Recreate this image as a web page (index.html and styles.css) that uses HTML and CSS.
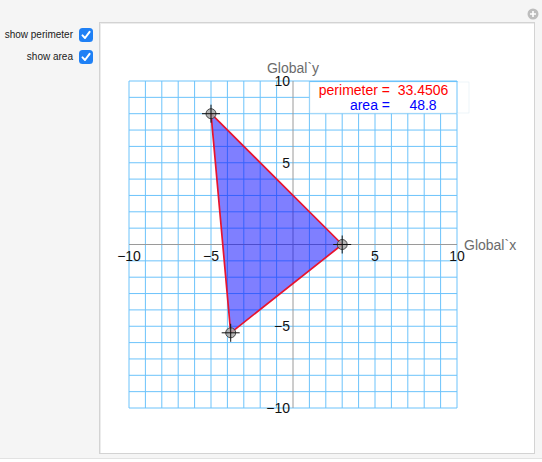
FILE: index.html
```html
<!DOCTYPE html>
<html>
<head>
<meta charset="utf-8">
<link rel="stylesheet" href="styles.css">
</head>
<body>
<div class="app">
  <div class="controls">
    <label class="row"><span class="lbl">show perimeter</span><span class="cb"><svg viewBox="0 0 14 14" width="14" height="14"><path d="M3.5 7.4 L6 10 L10.6 3.8" fill="none" stroke="#fff" stroke-width="2" stroke-linecap="round" stroke-linejoin="round"/></svg></span></label>
    <label class="row"><span class="lbl">show area</span><span class="cb"><svg viewBox="0 0 14 14" width="14" height="14"><path d="M3.5 7.4 L6 10 L10.6 3.8" fill="none" stroke="#fff" stroke-width="2" stroke-linecap="round" stroke-linejoin="round"/></svg></span></label>
  </div>
  <div class="panel">
    <svg class="plot" width="434" height="430" viewBox="100 23 434 430">
      <g class="grid" stroke="#6cc3fb" stroke-width="1" fill="none">
        <path d="M129 81V408M145.4 81V408M161.8 81V408M178.2 81V408M194.6 81V408M211 81V408M227.4 81V408M243.8 81V408M260.2 81V408M276.6 81V408M309.4 81V408M325.8 81V408M342.2 81V408M358.6 81V408M375 81V408M391.4 81V408M407.8 81V408M424.2 81V408M440.6 81V408M457 81V408"/>
        <path d="M129 81H457M129 97.35H457M129 113.7H457M129 130.05H457M129 146.4H457M129 162.75H457M129 179.1H457M129 195.45H457M129 211.8H457M129 228.15H457M129 260.85H457M129 277.2H457M129 293.55H457M129 309.9H457M129 326.25H457M129 342.6H457M129 358.95H457M129 375.3H457M129 391.65H457M129 408H457"/>
      </g>
      <g stroke="#9a9a9a" stroke-width="1">
        <path d="M293 81V408M129 244.5H457"/>
      </g>
      <rect x="310" y="82" width="159" height="31" fill="#fff" stroke="#e2edf5" stroke-width="0.6"/>
      <path d="M310 81.5H457M457 81V113" stroke="#6cc3fb" stroke-width="1"/>
      <text class="leg red" x="390" y="95" text-anchor="end">perimeter =</text>
      <text class="leg red" x="423" y="95" text-anchor="middle">33.4506</text>
      <text class="leg blue" x="390" y="110" text-anchor="end">area =</text>
      <text class="leg blue" x="423" y="110" text-anchor="middle">48.8</text>

      <polygon points="211,113.7 342.2,244.5 230.7,332.8" fill="rgba(0,0,255,0.5)" stroke="#e8142e" stroke-width="1.7" stroke-linejoin="round"/>

      <g class="loc">
        <circle cx="211" cy="113.7" r="5" fill="#a8a8a8" fill-opacity="0.85" stroke="#3a3a3a" stroke-width="0.9"/>
        <path d="M202 113.7H220M211 104.7V122.7" stroke="#111" stroke-width="1"/>
        <circle cx="342.2" cy="244.5" r="5" fill="#a8a8a8" fill-opacity="0.85" stroke="#3a3a3a" stroke-width="0.9"/>
        <path d="M333.2 244.5H351.2M342.2 235.5V253.5" stroke="#111" stroke-width="1"/>
        <circle cx="230.7" cy="332.8" r="5" fill="#a8a8a8" fill-opacity="0.85" stroke="#3a3a3a" stroke-width="0.9"/>
        <path d="M221.7 332.8H239.7M230.7 323.8V341.8" stroke="#111" stroke-width="1"/>
      </g>

      <g class="ticks">
        <text x="129" y="261" text-anchor="middle">−10</text>
        <text x="211" y="261" text-anchor="middle">−5</text>
        <text x="375" y="261" text-anchor="middle">5</text>
        <text x="457" y="261" text-anchor="middle">10</text>
        <text x="290" y="86" text-anchor="end">10</text>
        <text x="290" y="167.5" text-anchor="end">5</text>
        <text x="290" y="331" text-anchor="end">−5</text>
        <text x="290" y="413" text-anchor="end">−10</text>
      </g>
      <text class="axlbl" x="464" y="250">Global`x</text>
      <text class="axlbl" x="293" y="73" text-anchor="middle">Global`y</text>
    </svg>
  </div>
  <span class="plus"><svg viewBox="0 0 12 12" width="12" height="12"><circle cx="6" cy="6" r="5.5" fill="#bdbdbd"/><path d="M6 3V9M3 6H9" stroke="#fff" stroke-width="1.6"/></svg></span>
</div>
</body>
</html>
```
FILE: styles.css
```css
html, body {
  margin: 0;
  padding: 0;
  background: #ffffff;
}
.app {
  position: relative;
  width: 542px;
  height: 459px;
  box-sizing: border-box;
  background: #f5f5f5;
  border-bottom: 1px solid #e2e2e2;
  display: flex;
  flex-direction: row;
  align-items: flex-start;
  padding-top: 22px;
  font-family: "Liberation Sans", Arial, sans-serif;
}
.controls {
  width: 99px;
  box-sizing: border-box;
  padding-top: 1.5px;
  padding-right: 6px;
  display: flex;
  flex-direction: column;
  align-items: flex-end;
}
.row {
  height: 22px;
  display: flex;
  align-items: center;
  gap: 6px;
}
.lbl {
  font-size: 10px;
  color: #1a1a1a;
}
.cb {
  width: 14px;
  height: 14px;
  border-radius: 3.5px;
  background: #1f80f5;
  display: flex;
  align-items: center;
  justify-content: center;
}
.cb svg {
  display: block;
}
.panel {
  width: 436px;
  height: 432px;
  box-sizing: border-box;
  background: #ffffff;
  border: 1px solid #d3d3d3;
  box-shadow: inset 1px 1px 0 #ececec;
}
.plot {
  display: block;
}
.plot text {
  font-family: "Liberation Sans", Arial, sans-serif;
  font-size: 14px;
}
.ticks text {
  fill: #111;
}
.axlbl {
  fill: #6b6b6b;
}
.leg.red {
  fill: #ff0000;
}
.leg.blue {
  fill: #0000ff;
}
.plus {
  position: absolute;
  left: 527px;
  top: 8px;
  width: 12px;
  height: 12px;
}
.plus svg {
  display: block;
}
```
